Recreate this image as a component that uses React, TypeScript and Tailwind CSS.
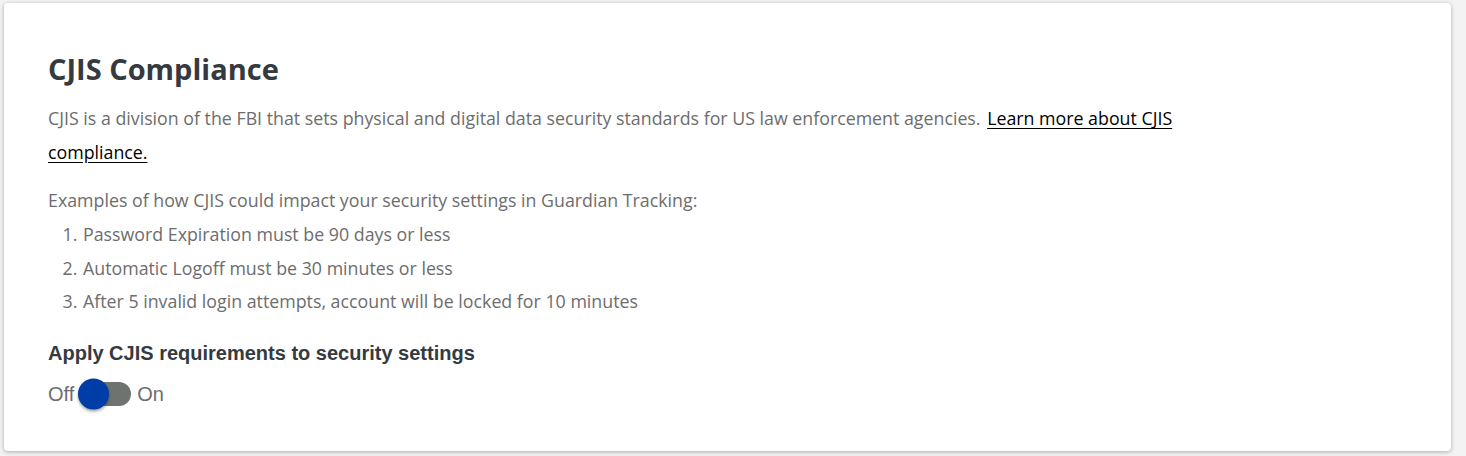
import React, { useState } from "react";

export default function App() {
  const [on, setOn] = useState(false);

  return (
    <div className="min-h-[456px] bg-[#f3f3f3] pl-[4px] pr-[15px] pt-[3px] pb-[6px]">
      <div className="rounded-[4px] bg-white pl-[44px] pr-[40px] pt-[46px] pb-[42px] shadow-[0_1px_4px_rgba(0,0,0,0.3)] font-['Open_Sans',sans-serif]">
        <h2 className="text-[29px] font-bold leading-[40px] text-[#343a40]">
          CJIS Compliance
        </h2>

        <p className="mt-[12px] max-w-[1140px] text-[17.8px] leading-[34px] text-[#6d6d6d]">
          CJIS is a division of the FBI that sets physical and digital data security standards for US law
          enforcement agencies.{" "}
          <a href="#" className="ml-[2px] text-black underline underline-offset-[3px]">
            Learn more about CJIS compliance.
          </a>
        </p>

        <p className="mt-[14px] text-[17.8px] leading-[34px] text-[#6d6d6d]">
          Examples of how CJIS could impact your security settings in Guardian Tracking:
        </p>
        <ol className="mt-[1px] list-decimal pl-[34px] text-[17.8px] leading-[33.5px] text-[#6d6d6d]">
          <li className="pl-[1px]">Password Expiration must be 90 days or less</li>
          <li className="pl-[1px]">Automatic Logoff must be 30 minutes or less</li>
          <li className="pl-[1px]">After 5 invalid login attempts, account will be locked for 10 minutes</li>
        </ol>

        {/* CJIS toggle */}
        <div className="mt-[22px] font-['Liberation_Sans',sans-serif]">
          <div className="text-[20px] font-bold leading-[24px] text-[#343a40]">
            Apply CJIS requirements to security settings
          </div>
          <div className="mt-[14px] flex items-center text-[20px] text-[#6d6d6d]">
            <span>Off</span>
            <button
              type="button"
              onClick={() => setOn(!on)}
              className="relative mx-[6px] h-[24px] w-[51px] rounded-full bg-[#6e7370]"
            >
              <span
                className={`absolute top-1/2 h-[31px] w-[31px] -translate-y-1/2 rounded-full bg-[#003da6] shadow-[0_2px_3px_rgba(0,0,0,0.35)] ${
                  on ? "left-[21px]" : "left-[-2px]"
                }`}
              />
            </button>
            <span>On</span>
          </div>
        </div>
      </div>
    </div>
  );
}
